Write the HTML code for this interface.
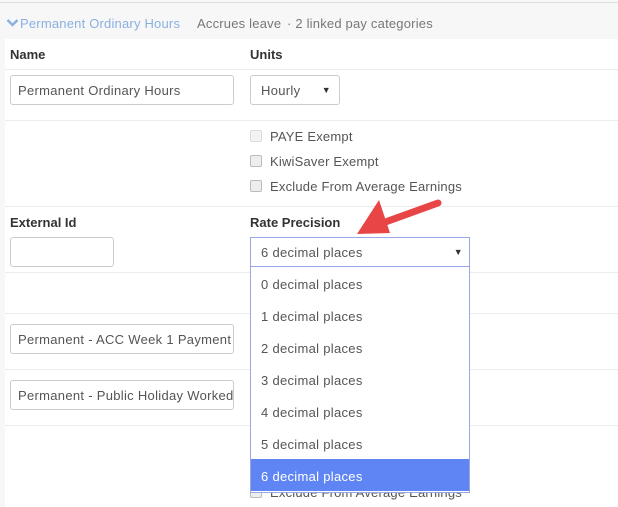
<!DOCTYPE html>
<html><head><style>
*{box-sizing:border-box;margin:0;padding:0}
body{width:618px;height:507px;overflow:hidden;background:#f7f7f7;font-family:"Liberation Sans",sans-serif;position:relative;color:#333}
.a{position:absolute}
.line{position:absolute;left:5px;right:0;height:1px;background:#ececec}
.lbl{position:absolute;font-size:13px;font-weight:bold;color:#333}
.inp{position:absolute;height:30px;border:1px solid #ccc;border-radius:3px;background:#fff;font-size:13px;color:#555;padding-left:7px;line-height:29px;white-space:nowrap;overflow:hidden;letter-spacing:0.3px}
.cb{position:absolute;left:250px;width:12px;height:12px;border:1px solid #bbb;border-radius:2px;background:#eee}
.ct{position:absolute;left:270px;font-size:13px;color:#555;letter-spacing:0.2px}
.opt{height:32px;line-height:35px;padding-left:10px;font-size:13px;color:#555;letter-spacing:0.3px}
</style></head><body>
<div class="a" style="left:0;top:2px;width:618px;height:1px;background:#ddd"></div>
<div class="a" style="left:5px;top:39px;width:613px;height:468px;background:#fff"></div>
<svg class="a" style="left:6px;top:18px" width="13" height="10"><path d="M1.5 2 L6.5 7 L11.5 2" stroke="#8ab0e0" stroke-width="2.5" fill="none"/></svg>
<div class="a" style="left:20px;top:16px;font-size:13px;color:#8ab0e0;letter-spacing:0.2px">Permanent Ordinary Hours</div>
<div class="a" style="left:197px;top:16px;font-size:13px;color:#777;letter-spacing:0.2px">Accrues leave</div>
<div class="a" style="left:287px;top:16px;font-size:13px;color:#777;letter-spacing:0.2px">· 2 linked pay categories</div>
<div class="lbl" style="left:10px;top:47px">Name</div>
<div class="lbl" style="left:250px;top:47px">Units</div>
<div class="line" style="top:69px"></div>
<div class="inp" style="left:10px;top:75px;width:224px">Permanent Ordinary Hours</div>
<div class="inp" style="left:250px;top:75px;width:90px;padding-left:10px">Hourly<span style="position:absolute;right:8px;font-size:9px;color:#333">▼</span></div>
<div class="line" style="top:120px"></div>
<div class="cb" style="top:130px;background:#f3f3f3;border-color:#ddd"></div><div class="ct" style="top:129px">PAYE Exempt</div>
<div class="cb" style="top:155px"></div><div class="ct" style="top:154px">KiwiSaver Exempt</div>
<div class="cb" style="top:180px"></div><div class="ct" style="top:179px">Exclude From Average Earnings</div>
<div class="line" style="top:206px"></div>
<div class="lbl" style="left:10px;top:215px">External Id</div>
<div class="lbl" style="left:250px;top:215px">Rate Precision</div>
<div class="inp" style="left:10px;top:237px;width:104px"></div>
<div class="line" style="top:272px"></div>
<div class="line" style="top:313px"></div>
<div class="inp" style="left:10px;top:324px;width:224px">Permanent - ACC Week 1 Payment</div>
<div class="line" style="top:369px"></div>
<div class="inp" style="left:10px;top:380px;width:224px">Permanent - Public Holiday Worked</div>
<div class="line" style="top:425px"></div>
<div class="cb" style="top:486px"></div><div class="ct" style="top:485px">Exclude From Average Earnings</div>
<div class="inp" style="left:250px;top:237px;width:220px;border-color:#9aa6e6;border-radius:0;padding-left:10px">6 decimal places<span style="position:absolute;right:6px;font-size:9px;color:#333">▼</span></div>
<div class="a" style="left:250px;top:267px;width:220px;height:226px;background:#fff;border:1px solid #9aa6e6;border-top:none">
<div class="opt">0 decimal places</div><div class="opt">1 decimal places</div><div class="opt">2 decimal places</div><div class="opt">3 decimal places</div><div class="opt">4 decimal places</div><div class="opt">5 decimal places</div><div class="opt" style="background:#5f85f4;color:#fff">6 decimal places</div>
</div>
<svg class="a" style="left:0;top:0" width="618" height="507"><path d="M438 203 L380 224" stroke="#e84646" stroke-width="7" stroke-linecap="round"/><polygon points="357,234 379,200 390,233" fill="#e84646"/></svg>
</body></html>
